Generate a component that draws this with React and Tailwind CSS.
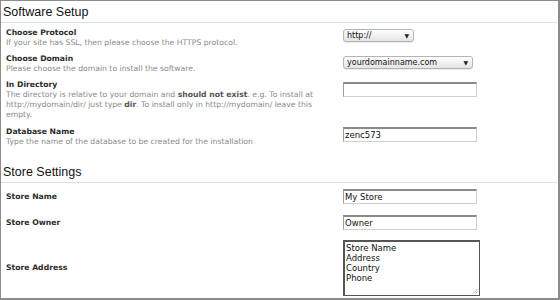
import React from "react";

const verdana = { fontFamily: '"DejaVu Sans", Verdana, sans-serif' };

function Heading({ children }) {
  return (
    <div className="border-b border-[#d3e3ee] pl-[2px] h-[22px] flex items-end">
      <h2 className="text-[12.5px] leading-[19px] text-[#111] font-['Liberation_Sans',Arial,sans-serif]">
        {children}
      </h2>
    </div>
  );
}

function Label({ children }) {
  return <div className="font-bold text-[#2a2a2a] text-[7.7px] leading-[10px]">{children}</div>;
}

function Desc({ children }) {
  return <div className="text-[#8a8a8a] text-[7.7px] leading-[10px] whitespace-nowrap">{children}</div>;
}

function FakeSelect({ value, width }) {
  return (
    <div
      className={`${width} h-[13px] flex items-center justify-between pl-[3px] pr-[4px] rounded-[3px] border border-[#b4b4b4] bg-gradient-to-b from-white to-[#e4e4e4] shadow-[0_1px_0_rgba(0,0,0,0.08)]`}
    >
      <span className="text-[8px] leading-none text-[#111]">{value}</span>
      <span className="text-[6px] leading-none text-[#222]">▼</span>
    </div>
  );
}

function TextInput({ value }) {
  return (
    <div className="w-[134px] h-[15px] border border-[#d0d0d0] border-t-[#8a8a8a] border-l-[#a0a0a0] border-t-2 bg-white flex items-center pl-[1px]">
      <span className="text-[8.5px] leading-none text-[#111]">{value}</span>
    </div>
  );
}

export default function App() {
  return (
    <div style={verdana} className="w-[560px] h-[300px] bg-white border border-[#8c8c8c] border-r-2 border-b-2 overflow-hidden">
      <Heading>Software Setup</Heading>

      <div className="flex pt-[5px]">
        <div className="w-[342px] pl-[5px]">
          <Label>Choose Protocol</Label>
          <Desc>If your site has SSL, then please choose the HTTPS protocol.</Desc>
        </div>
        <div className="pt-[1px]">
          <FakeSelect value="http://" width="w-[71px]" />
        </div>
      </div>

      <div className="flex pt-[6px]">
        <div className="w-[342px] pl-[5px]">
          <Label>Choose Domain</Label>
          <Desc>Please choose the domain to install the software.</Desc>
        </div>
        <div className="pt-[2px]">
          <FakeSelect value="yourdomainname.com" width="w-[130px]" />
        </div>
      </div>

      <div className="flex pt-[6px]">
        <div className="w-[342px] pl-[5px]">
          <Label>In Directory</Label>
          <Desc>
            The directory is relative to your domain and <b className="text-[#555]">should not exist</b>. e.g. To install at
            <br />
            http://mydomain/dir/ just type <b className="text-[#555]">dir</b>. To install only in http://mydomain/ leave this
            <br />
            empty.
          </Desc>
        </div>
        <div className="pt-[2px]">
          <TextInput value="" />
        </div>
      </div>

      <div className="flex pt-[7px]">
        <div className="w-[342px] pl-[5px]">
          <Label>Database Name</Label>
          <Desc>Type the name of the database to be created for the installation</Desc>
        </div>
        <div>
          <TextInput value="zenc573" />
        </div>
      </div>

      <div className="pt-[14px]">
        <Heading>Store Settings</Heading>
      </div>

      <div className="flex items-center pt-[6px]">
        <div className="w-[342px] pl-[5px]">
          <Label>Store Name</Label>
        </div>
        <TextInput value="My Store" />
      </div>

      <div className="flex items-center pt-[11px]">
        <div className="w-[342px] pl-[5px]">
          <Label>Store Owner</Label>
        </div>
        <TextInput value="Owner" />
      </div>

      <div className="flex items-center pt-[10px]">
        <div className="w-[342px] pl-[5px]">
          <Label>Store Address</Label>
        </div>
        <div className="relative w-[137px] h-[56px] border border-[#555] border-t-2 border-l-2 bg-white pl-[1px] pt-[1px]">
          <div className="text-[8.5px] leading-[10px] text-[#111]">
            Store Name
            <br />
            Address
            <br />
            Country
            <br />
            Phone
          </div>
          <svg className="absolute right-[1px] bottom-[1px]" width="6" height="6" viewBox="0 0 6 6">
            <path d="M5.5 1 L1 5.5 M5.5 3.5 L3.5 5.5" stroke="#999" strokeWidth="0.8" />
          </svg>
        </div>
      </div>
    </div>
  );
}
